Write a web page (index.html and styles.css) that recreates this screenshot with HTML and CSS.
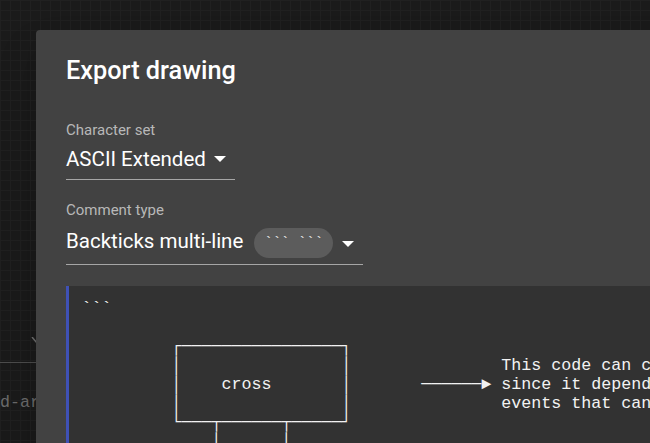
FILE: index.html
```html
<!DOCTYPE html>
<html lang="en">
<head>
<meta charset="utf-8">
<title>Export drawing</title>
<link rel="stylesheet" href="styles.css">
</head>
<body>
<div class="app">
  <div class="canvas">
    <svg class="chev" width="12" height="7" viewBox="0 0 12 7"><polyline points="1,0 6,6 11,0" fill="none" stroke="#6e6e6e" stroke-width="1.5"/></svg>
    <div class="rule"></div>
    <div class="ghost-code">d-arrow</div>
  </div>
</div>
<div class="dialog">
  <h2 class="title">Export drawing</h2>
  <div class="field">
    <div class="label">Character set</div>
    <div class="select">
      <span class="value">ASCII Extended</span>
      <span class="caret"></span>
    </div>
  </div>
  <div class="field field-comment">
    <div class="label">Comment type</div>
    <div class="select select-comment">
      <span class="value">Backticks multi-line</span>
      <span class="chip">``` ```</span>
      <span class="caret"></span>
    </div>
  </div>
  <div class="preview">
<pre class="ascii">```

         ┌────────────────┐
         │                │               This code can cause trouble,
         │    cross       │       ──────► since it depends on external
         │                │               events that can happen later.
         └───┬──────┬─────┘
             │      │</pre>
  </div>
</div>
</body>
</html>
```
FILE: styles.css
```css
html, body {
  margin: 0;
  padding: 0;
}

body {
  width: 650px;
  height: 443px;
  overflow: hidden;
  position: relative;
  background-color: #1a1a1a;
  background-image:
    linear-gradient(to right, #202020 1px, transparent 1px),
    linear-gradient(to bottom, #202020 1px, transparent 1px);
  background-size: 10px 10px;
  font-family: Roboto, "Liberation Sans", sans-serif;
}

.app {
  height: 100%;
}

.canvas {
  padding-top: 337px;
}

.chev {
  display: block;
  margin-left: 31px;
}

.rule {
  margin-top: 18px;
  height: 1px;
  background: #4c4c4c;
}

.ghost-code {
  margin-top: 30px;
  font-family: "Liberation Mono", monospace;
  font-size: 16.667px;
  line-height: 19px;
  color: #6a6a6a;
  white-space: pre;
}

.dialog {
  position: absolute;
  left: 36px;
  top: 30px;
  width: 680px;
  height: 460px;
  box-sizing: border-box;
  padding: 25px 30px 0;
  background: #424242;
  border-radius: 4px;
  box-shadow: 0 11px 15px -7px rgba(0,0,0,.2), 0 24px 38px 3px rgba(0,0,0,.14);
  overflow: hidden;
  color: #ffffff;
}

.title {
  margin: 0;
  font-size: 25.3px;
  font-weight: 500;
  line-height: 32px;
  color: #ffffff;
}

.field {
  margin-top: 33px;
}

.field-comment {
  margin-top: 20px;
}

.label {
  font-size: 15px;
  line-height: 20px;
  color: #b8b8b8;
}

.select {
  display: inline-flex;
  align-items: center;
  gap: 8px;
  margin-top: 5px;
  padding-right: 9px;
  padding-bottom: 6px;
  border-bottom: 1px solid #a6a6a6;
}

.value {
  font-size: 20.5px;
  line-height: 28px;
  color: #ffffff;
}

.caret {
  width: 0;
  height: 0;
  border-left: 6.5px solid transparent;
  border-right: 6.5px solid transparent;
  border-top: 6.5px solid #ffffff;
}

.select-comment {
  margin-top: 7px;
  align-items: flex-start;
  gap: 0;
}

.select-comment .value {
  margin-right: 11px;
}

.chip {
  margin-top: 1px;
  height: 30px;
  width: 79px;
  box-sizing: border-box;
  padding: 0 10px;
  border-radius: 15px;
  background: #5c5c5c;
  font-family: "Liberation Mono", monospace;
  font-size: 14px;
  line-height: 30px;
  color: #e6e6e6;
  white-space: pre;
}

.select-comment .caret {
  margin-top: 14px;
  margin-left: 9px;
}

.preview {
  margin-top: 21px;
  height: 200px;
  background: #323232;
  border-left: 3px solid #3f51b5;
}

.ascii {
  margin: 0;
  padding: 13px 0 0 12.5px;
  font-family: "Liberation Mono", "DejaVu Sans Mono", monospace;
  font-size: 16.667px;
  line-height: 19px;
  color: #f2f2f2;
  white-space: pre;
  overflow: hidden;
}
```
